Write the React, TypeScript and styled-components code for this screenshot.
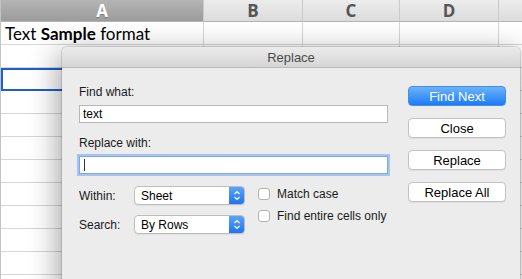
import React from "react";
import styled, { createGlobalStyle } from "styled-components";

const Global = createGlobalStyle`
  html, body { margin: 0; padding: 0; background: #fff; }
  body { width: 522px; height: 279px; overflow: hidden; font-family: "Liberation Sans", Arial, sans-serif; }
`;

const Page = styled.div`
  position: relative;
  width: 522px;
  height: 279px;
  overflow: hidden;
  background: #fff;
`;

const COLS = [203, 99, 97, 99, 60];

const Sheet = styled.div`
  display: grid;
  grid-template-columns: ${COLS.map((c) => c + "px").join(" ")};
  grid-auto-rows: 23px;
  grid-template-rows: 22px;
  border-left: 2px solid #c4c4c4;
  margin-left: -1px;
`;

const HeadCell = styled.div<{ $sel?: boolean }>`
  display: flex;
  align-items: center;
  justify-content: center;
  box-sizing: border-box;
  border-right: 1px solid #c9c9c9;
  border-bottom: 1px solid #b5b5b5;
  background: ${(p) =>
    p.$sel
      ? "linear-gradient(#b4b4b4, #9c9c9c)"
      : "linear-gradient(#ececec, #dcdcdc)"};
  color: ${(p) => (p.$sel ? "#fff" : "#555")};
  font-family: "Open Sans", "Liberation Sans", sans-serif;
  font-weight: 700;
  font-size: 17px;
  text-shadow: ${(p) => (p.$sel ? "0 1px 1px rgba(0,0,0,0.25)" : "none")};
`;

const Cell = styled.div<{ $active?: boolean }>`
  box-sizing: border-box;
  border-right: 1px solid #d6d6d6;
  border-bottom: 1px solid #d6d6d6;
  font-family: Lato, "Open Sans", sans-serif;
  font-size: 17px;
  color: #000;
  padding-left: 4px;
  display: flex;
  align-items: center;
  white-space: nowrap;
  ${(p) => (p.$active ? "outline: 2px solid #1d5fcf; outline-offset: -2px;" : "")}
`;

const Dialog = styled.div`
  position: absolute;
  left: 62px;
  top: 47px;
  width: 458px;
  height: 250px;
  background: #ececec;
  border-radius: 5px 5px 0 0;
  box-shadow: -3px 6px 30px rgba(0, 0, 0, 0.38), 0 0 0 1px rgba(0, 0, 0, 0.12);
  display: flex;
  flex-direction: column;
`;

const TitleBar = styled.div`
  height: 21px;
  box-sizing: border-box;
  border-radius: 5px 5px 0 0;
  background: linear-gradient(#ebebeb, #d6d6d6);
  border-bottom: 1px solid #b9b9b9;
  display: flex;
  align-items: center;
  justify-content: center;
  font-size: 13px;
  color: #4a4a4a;
`;

const Body = styled.div`
  display: flex;
  padding: 17px 14px 0 17px;
  gap: 20px;
`;

const LeftCol = styled.div`
  width: 309px;
  display: flex;
  flex-direction: column;
`;

const Label = styled.div`
  font-size: 12px;
  color: #1a1a1a;
  line-height: 15px;
  margin-bottom: 5px;
`;

const TextField = styled.div<{ $focus?: boolean }>`
  height: 18px;
  box-sizing: border-box;
  background: #fff;
  border: 1px solid ${(p) => (p.$focus ? "#7ea8e6" : "#b8b8b8")};
  box-shadow: ${(p) => (p.$focus ? "0 0 0 2px #a5c4f0" : "none")};
  display: flex;
  align-items: center;
  padding-left: 3px;
  font-size: 12px;
  color: #000;
  margin-bottom: ${(p) => (p.$focus ? "12px" : "13px")};
`;

const Caret = styled.span`
  display: inline-block;
  width: 1px;
  height: 12px;
  background: #333;
  margin-left: 1px;
`;

const OptionsRow = styled.div`
  display: flex;
  gap: 13px;
`;

const SelectGrid = styled.div`
  display: grid;
  grid-template-columns: 55px 111px;
  row-gap: 10px;
  align-items: center;
`;

const FormLabel = styled.div`
  font-size: 12px;
  color: #1a1a1a;
`;

const Select = styled.div`
  height: 19px;
  box-sizing: border-box;
  border: 1px solid #bdbdbd;
  border-radius: 4px;
  background: #fff;
  display: flex;
  align-items: center;
  font-size: 12px;
  color: #000;
  overflow: hidden;
  box-shadow: 0 1px 0 rgba(0, 0, 0, 0.05);
`;

const SelectText = styled.span`
  flex: 1;
  padding-left: 6px;
`;

const SelectArrow = styled.span`
  width: 15px;
  height: 100%;
  background: linear-gradient(#5fa3f7, #1f74ee);
  display: flex;
  align-items: center;
  justify-content: center;
`;

const Checks = styled.div`
  display: flex;
  flex-direction: column;
  gap: 8px;
  padding-top: 1px;
`;

const CheckRow = styled.label`
  display: flex;
  align-items: center;
  gap: 7px;
  font-size: 12px;
  color: #1a1a1a;
`;

const Box = styled.span`
  width: 12px;
  height: 12px;
  box-sizing: border-box;
  border: 1px solid #b1b1b1;
  border-radius: 3px;
  background: #fff;
`;

const Buttons = styled.div`
  display: flex;
  flex-direction: column;
  gap: 12px;
  padding-top: 1px;
`;

const Button = styled.div<{ $primary?: boolean }>`
  width: 98px;
  height: 20px;
  box-sizing: border-box;
  border-radius: 4px;
  display: flex;
  align-items: center;
  justify-content: center;
  font-size: 13px;
  ${(p) =>
    p.$primary
      ? `background: linear-gradient(#6cb3fa, #1b7cf5); color: #fff; border: 1px solid #3f8ef0;`
      : `background: #fff; color: #000; border: 1px solid #c2c2c2; box-shadow: 0 1px 0 rgba(0,0,0,0.06);`}
`;

const Arrows = () => (
  <svg width="8" height="11" viewBox="0 0 8 11">
    <path d="M1.5 4 L4 1.5 L6.5 4 M1.5 7 L4 9.5 L6.5 7" stroke="#fff" strokeWidth="1.2" fill="none" />
  </svg>
);

export default function App() {
  const rows = 12;
  const headers = ["A", "B", "C", "D", ""];
  return (
    <Page>
      <Global />
      <Sheet>
        {headers.map((h, i) => (
          <HeadCell key={i} $sel={i === 0}>
            {h}
          </HeadCell>
        ))}
        {Array.from({ length: rows }).map((_, r) =>
          headers.map((_, c) => (
            <Cell key={r + "-" + c} $active={r === 2 && c === 0}>
              {r === 0 && c === 0 ? (
                <>
                  Text&nbsp;<b>Sample</b>&nbsp;format
                </>
              ) : null}
            </Cell>
          ))
        )}
      </Sheet>
      <Dialog>
        <TitleBar>Replace</TitleBar>
        <Body>
          <LeftCol>
            <Label>Find what:</Label>
            <TextField>text</TextField>
            <Label>Replace with:</Label>
            <TextField $focus>
              <Caret />
            </TextField>
            <OptionsRow>
              <SelectGrid>
                <FormLabel>Within:</FormLabel>
                <Select>
                  <SelectText>Sheet</SelectText>
                  <SelectArrow>
                    <Arrows />
                  </SelectArrow>
                </Select>
                <FormLabel>Search:</FormLabel>
                <Select>
                  <SelectText>By Rows</SelectText>
                  <SelectArrow>
                    <Arrows />
                  </SelectArrow>
                </Select>
              </SelectGrid>
              <Checks>
                <CheckRow>
                  <Box />
                  Match case
                </CheckRow>
                <CheckRow>
                  <Box />
                  Find entire cells only
                </CheckRow>
              </Checks>
            </OptionsRow>
          </LeftCol>
          <Buttons>
            <Button $primary>Find Next</Button>
            <Button>Close</Button>
            <Button>Replace</Button>
            <Button>Replace All</Button>
          </Buttons>
        </Body>
      </Dialog>
    </Page>
  );
}
